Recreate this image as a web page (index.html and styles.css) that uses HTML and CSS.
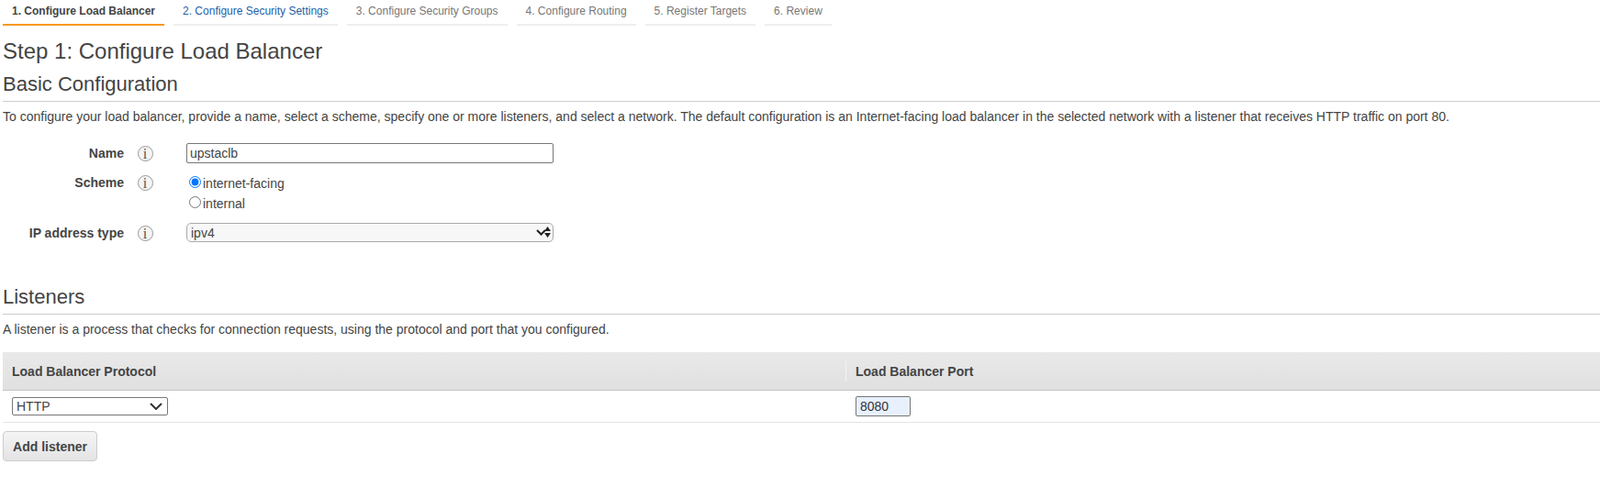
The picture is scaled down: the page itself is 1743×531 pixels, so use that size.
FILE: index.html
```html
<!DOCTYPE html>
<html lang="en">
<head>
    <meta charset="UTF-8">
    <meta name="viewport" content="width=device-width, initial-scale=1.0">
    <title>Configure Load Balancer</title>
    <link rel="stylesheet" href="styles.css">
</head>
<body>
    <ul class="wizard-tabs">
        <li class="tab current">1. Configure Load Balancer</li>
        <li class="tab next"><a href="#">2. Configure Security Settings</a></li>
        <li class="tab">3. Configure Security Groups</li>
        <li class="tab">4. Configure Routing</li>
        <li class="tab">5. Register Targets</li>
        <li class="tab">6. Review</li>
    </ul>

    <h1>Step 1: Configure Load Balancer</h1>

    <section class="basic">
        <h2>Basic Configuration</h2>
        <p class="intro">To configure your load balancer, provide a name, select a scheme, specify one or more listeners, and select a network. The default configuration is an Internet-facing load balancer in the selected network with a listener that receives HTTP traffic on port 80.</p>

        <div class="form-grid">
            <label class="field-label" for="lb-name">Name</label>
            <span class="info">i</span>
            <input class="text-input" id="lb-name" type="text" value="upstaclb">

            <span class="field-label">Scheme</span>
            <span class="info">i</span>
            <div class="radio-group">
                <label class="radio"><input type="radio" name="scheme" checked>internet-facing</label>
                <label class="radio"><input type="radio" name="scheme">internal</label>
            </div>

            <label class="field-label" for="lb-ip">IP address type</label>
            <span class="info">i</span>
            <div class="select-wrap">
                <select class="ip-select" id="lb-ip"><option>ipv4</option></select>
                <svg class="arrows" width="16" height="12" viewBox="0 0 16 12">
                    <path d="M1 4 5.500 8.500 10 4" fill="none" stroke="#222" stroke-width="2"/>
                    <path d="M12.500 0 16 5H9zM12.500 12 9 7H16z" fill="#222"/>
                </svg>
            </div>
        </div>
    </section>

    <section class="listeners">
        <h2>Listeners</h2>
        <p class="intro">A listener is a process that checks for connection requests, using the protocol and port that you configured.</p>

        <div class="table-head">
            <div class="th">Load Balancer Protocol</div>
            <div class="th th-port">Load Balancer Port</div>
        </div>
        <div class="table-row">
            <div class="td">
                <div class="select-wrap protocol-wrap">
                    <select class="protocol"><option>HTTP</option></select>
                    <svg class="chevron" width="14" height="8" viewBox="0 0 14 8"><path d="M1 1 7 7 13 1" fill="none" stroke="#333" stroke-width="2"/></svg>
                </div>
            </div>
            <div class="td td-port">
                <input class="port" type="text" value="8080">
            </div>
        </div>

        <button class="add-btn">Add listener</button>
    </section>
</body>
</html>
```

FILE: styles.css
```css
/* reset */
* {
    margin: 0;
    padding: 0;
    box-sizing: border-box;
}

body {
    font-family: "Liberation Sans", Arial, sans-serif;
    font-size: 14px;
    color: #444;
    background: #fff;
    padding-left: 3px;
}

/* wizard tabs */
.wizard-tabs {
    display: flex;
    gap: 10px;
    list-style: none;
    height: 28px;
}

.tab {
    padding: 4px 10px 0;
    font-size: 12px;
    line-height: 16px;
    color: #777;
    border-bottom: 2px solid #eee;
}

.tab a {
    color: #1d5fa8;
    text-decoration: none;
}

.tab.current {
    color: #444;
    font-weight: 700;
    border-bottom-color: #f7981d;
}

/* headings */
h1 {
    font-size: 24px;
    font-weight: 400;
    line-height: 28px;
    color: #444;
    margin-top: 14px;
}

h2 {
    font-size: 22px;
    font-weight: 400;
    line-height: 26px;
    color: #444;
    padding-bottom: 5px;
    border-bottom: 1px solid #ccc;
}

.basic {
    margin-top: 9px;
}

.intro {
    font-size: 14px;
    line-height: 16px;
    margin-top: 8px;
}

/* form */
.form-grid {
    display: grid;
    grid-template-columns: 132px 68px 400px;
    align-items: start;
    margin-top: 21px;
    row-gap: 10px;
}

.field-label {
    font-weight: 700;
    text-align: right;
    line-height: 22px;
}

.info {
    justify-self: center;
    width: 17px;
    height: 17px;
    margin-top: 3px;
    margin-right: 22px;
    border: 1px solid #999;
    border-radius: 50%;
    background: #f4f4f4;
    font: 16px/15px "Liberation Serif", serif;
    text-align: center;
    color: #555;
}

.text-input {
    width: 400px;
    height: 22px;
    padding: 0 3px;
    border: 1px solid #777;
    border-radius: 2px;
    font: 14px "Liberation Sans", Arial, sans-serif;
    color: #444;
}

.radio-group {
    display: flex;
    flex-direction: column;
    margin-top: 1px;
}

.radio {
    display: flex;
    align-items: center;
    height: 22px;
}

.radio input {
    margin: 0 2px 3px 3px;
    width: 13px;
    height: 13px;
}

/* selects: native arrow hidden, arrow drawn over it */
.select-wrap {
    position: relative;
}

.ip-select {
    appearance: none;
    display: block;
    width: 400px;
    height: 21px;
    padding-left: 4px;
    border: 1px solid #aaa;
    border-radius: 5px;
    background: #f7f7f7;
    font: 14px "Liberation Sans", Arial, sans-serif;
    color: #444;
}

.arrows {
    position: absolute;
    right: 3px;
    top: 4px;
}

/* listeners */
.listeners {
    margin-top: 46px;
}

.table-head {
    display: flex;
    align-items: center;
    height: 42px;
    margin-top: 17px;
    background: linear-gradient(#e9e9e9, #e0e0e0);
    border-bottom: 1px solid #c6c6c6;
}

.th {
    font-weight: 700;
    padding-left: 10px;
    width: 918px;
}

.th-port {
    width: auto;
    line-height: 22px;
    border-left: 1px solid #f4f4f4;
}

.table-row {
    display: flex;
    align-items: center;
    height: 35px;
    border-bottom: 1px solid #e4e4e4;
}

.td {
    width: 918px;
    padding-left: 10px;
}

.protocol-wrap {
    width: 170px;
}

.protocol {
    appearance: none;
    display: block;
    width: 170px;
    height: 20px;
    padding-left: 4px;
    border: 1px solid #777;
    border-radius: 2px;
    background: #fff;
    font: 14px "Liberation Sans", Arial, sans-serif;
    color: #444;
}

.chevron {
    position: absolute;
    right: 6px;
    top: 6px;
}

.td-port {
    width: auto;
    padding-left: 11px;
}

.port {
    display: block;
    width: 60px;
    height: 22px;
    padding: 0 4px;
    border: 1px solid #777;
    border-radius: 2px;
    background: #e8f0fe;
    font: 14px "Liberation Sans", Arial, sans-serif;
    color: #333;
}

.add-btn {
    display: block;
    width: 103px;
    height: 33px;
    margin-top: 9px;
    border: 1px solid #ccc;
    border-radius: 4px;
    background: linear-gradient(#f4f4f4, #e4e4e4);
    font: 700 14px "Liberation Sans", Arial, sans-serif;
    color: #444;
}
```
